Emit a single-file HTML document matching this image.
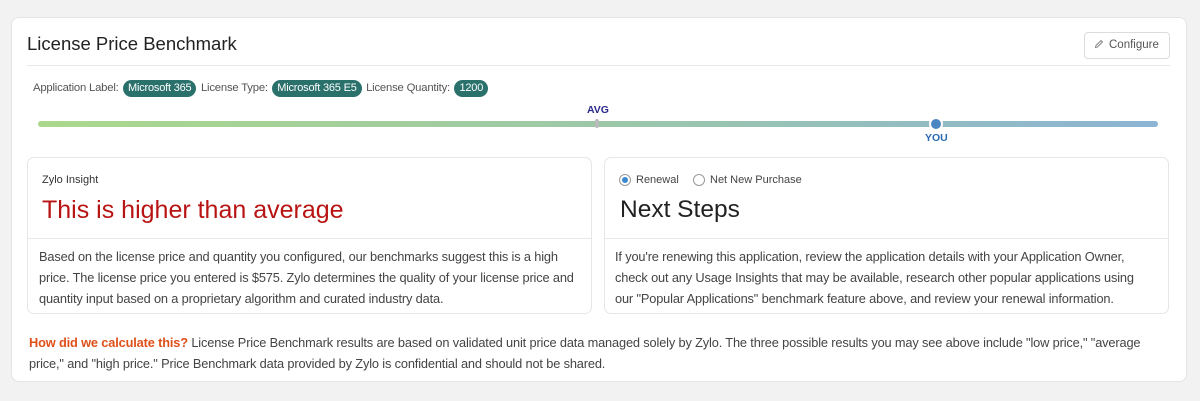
<!DOCTYPE html>
<html><head><meta charset="utf-8"><style>
*{box-sizing:border-box;margin:0;padding:0}
body{width:1200px;height:401px;background:#f2f2f2;font-family:"Liberation Sans",sans-serif;color:#333;position:relative;overflow:hidden}
.a{position:absolute;white-space:nowrap}
.card{position:absolute;left:11px;top:17px;width:1176px;height:365px;background:#fff;border:1px solid #e4e4e4;border-radius:8px}
.pill{display:inline-block;background:#2a706b;color:#fff;border-radius:9px;padding:2px 5px;font-size:11px;line-height:13px;letter-spacing:-0.2px}
.lab{font-size:11.3px;color:#555;letter-spacing:-0.2px}
.panel{position:absolute;top:157px;height:157px;border:1px solid #e6e6e6;border-radius:7px;background:#fff}
.body{font-size:12.8px;line-height:21px;color:#444;letter-spacing:-0.15px}
</style></head><body>
<div class="card"></div>
<div class="a" style="left:27px;top:33px;font-size:18.5px;color:#222">License Price Benchmark</div>
<div class="a" style="left:1084px;top:32px;width:86px;height:27px;border:1px solid #dcdcdc;border-radius:4px;font-size:11.5px;color:#555;line-height:25px;padding-left:9px">
<svg width="10" height="10" viewBox="0 0 10 10" style="vertical-align:-1px;margin-right:5px"><path d="M1.5 8.5 L2 6.5 L7 1.5 L8.5 3 L3.5 8 Z" fill="none" stroke="#777" stroke-width="0.9"/></svg>Configure</div>
<div class="a" style="left:27px;top:65px;width:1143px;height:1px;background:#e8e8e8"></div>
<div class="a" style="left:33px;top:78px"><span class="lab">Application Label:</span> <span class="pill">Microsoft 365</span> <span class="lab">License Type:</span> <span class="pill">Microsoft 365 E5</span> <span class="lab">License Quantity:</span> <span class="pill">1200</span></div>
<div class="a" style="left:38px;top:121px;width:1120px;height:6px;border-radius:3px;background:linear-gradient(90deg,#acd88c,#9cc8a8 50%,#8cb4d4)"></div>
<div class="a" style="left:595px;top:119px;width:4px;height:9px;border-radius:2px;background:#bbb"></div>
<div class="a" style="left:587px;top:104px;font-size:10.5px;color:#2a2a8a;font-weight:bold">AVG</div>
<div class="a" style="left:929px;top:117px;width:14px;height:14px;border-radius:50%;background:#4a86c2;border:2px solid #fff"></div>
<div class="a" style="left:925px;top:132px;font-size:10.5px;color:#2a6ab0;font-weight:bold">YOU</div>

<div class="panel" style="left:27px;width:565px"></div>
<div class="a" style="left:28px;top:238px;width:563px;height:1px;background:#e8e8e8"></div>
<div class="a" style="left:42px;top:174px;font-size:11px;color:#333">Zylo Insight</div>
<div class="a" style="left:42px;top:196px;font-size:25px;color:#b81414">This is higher than average</div>
<div class="a body" style="left:39px;top:246px">Based on the license price and quantity you configured, our benchmarks suggest this is a high<br>price. The license price you entered is $575. Zylo determines the quality of your license price and<br>quantity input based on a proprietary algorithm and curated industry data.</div>

<div class="panel" style="left:604px;width:565px"></div>
<div class="a" style="left:605px;top:238px;width:563px;height:1px;background:#e8e8e8"></div>
<div class="a" style="left:619px;top:174px;width:12px;height:12px;border-radius:50%;border:1px solid #999;background:#fff"><div style="position:absolute;left:2px;top:2px;width:6px;height:6px;border-radius:50%;background:#3a88d0"></div></div>
<div class="a" style="left:636px;top:174px;font-size:11px;color:#444">Renewal</div>
<div class="a" style="left:693px;top:174px;width:12px;height:12px;border-radius:50%;border:1px solid #999"></div>
<div class="a" style="left:710px;top:174px;font-size:11px;color:#444">Net New Purchase</div>
<div class="a" style="left:620px;top:196px;font-size:24.5px;color:#222">Next Steps</div>
<div class="a body" style="left:615px;top:246px">If you're renewing this application, review the application details with your Application Owner,<br>check out any Usage Insights that may be available, research other popular applications using<br>our "Popular Applications" benchmark feature above, and review your renewal information.</div>

<div class="a body" style="left:29px;top:332px"><span style="color:#e0501a;font-weight:bold">How did we calculate this?</span> License Price Benchmark results are based on validated unit price data managed solely by Zylo. The three possible results you may see above include "low price," "average<br>price," and "high price." Price Benchmark data provided by Zylo is confidential and should not be shared.</div>
</body></html>
